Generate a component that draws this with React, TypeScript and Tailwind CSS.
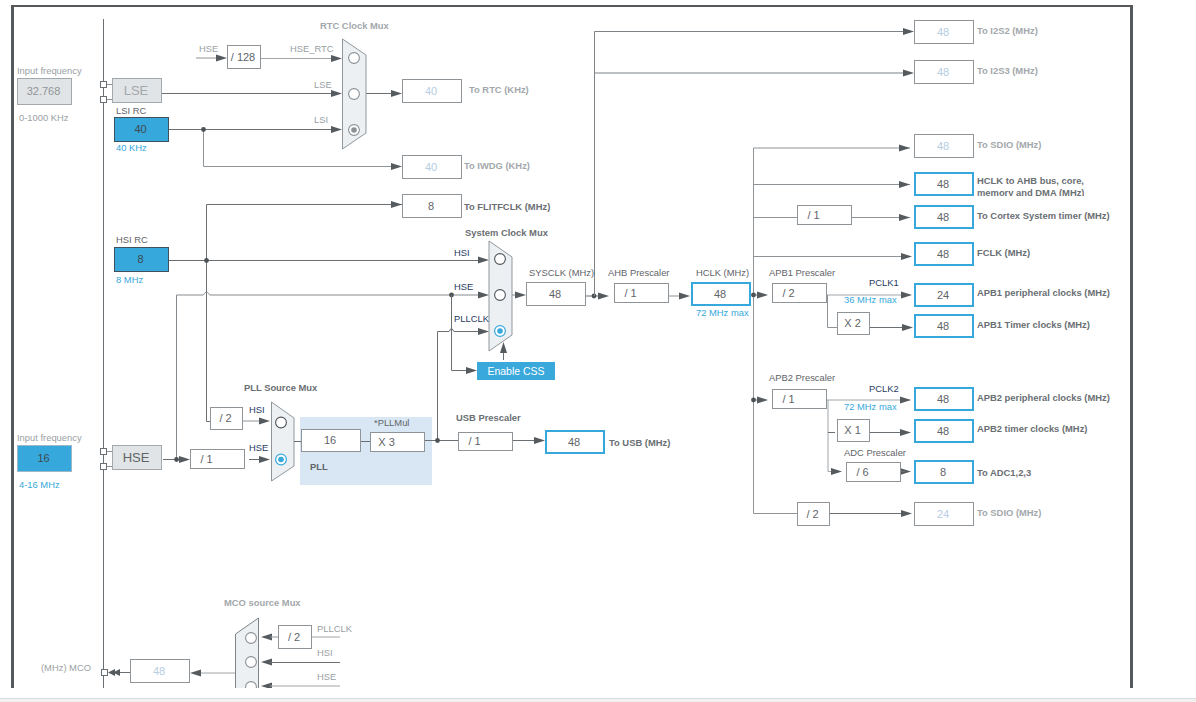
import React from "react";

const A = ({ x, y, d = "r" }: { x: number; y: number; d?: "r" | "l" | "u" }) => {
  // x,y = tip of the arrow
  const pts =
    d === "r"
      ? `${x},${y} ${x - 11},${y - 3.5} ${x - 11},${y + 3.5}`
      : d === "l"
        ? `${x},${y} ${x + 11},${y - 3.5} ${x + 11},${y + 3.5}`
        : `${x},${y} ${x - 3.5},${y + 11} ${x + 3.5},${y + 11}`;
  return <polygon points={pts} fill="#555a5e" />;
};

const Dot = ({ x, y }: { x: number; y: number }) => <circle cx={x} cy={y} r={2.4} fill="#4d5256" />;

const Radio = ({ x, y, kind }: { x: number; y: number; kind?: "gray" | "blue" | "dark" | "light" }) => {
  if (kind === "blue")
    return (
      <g>
        <circle cx={x} cy={y} r={5.4} fill="#fff" stroke="#36a8dc" strokeWidth={1.2} />
        <circle cx={x} cy={y} r={2.8} fill="#36a8dc" />
      </g>
    );
  if (kind === "gray")
    return (
      <g>
        <circle cx={x} cy={y} r={5.4} fill="#fff" stroke="#8b9094" strokeWidth={1.1} />
        <circle cx={x} cy={y} r={2.8} fill="#8b9094" />
      </g>
    );
  return <circle cx={x} cy={y} r={5.4} fill="#fff" stroke={kind === "dark" ? "#50555a" : "#8b9094"} strokeWidth={1.1} />;
};

const Wire = ({ d, c = "#6a6f73" }: { d: string; c?: string }) => <path d={d} fill="none" stroke={c} strokeWidth={1} />;

const Diagram = () => (
  <svg width={1196} height={688} className="absolute left-0 top-0">
    {/* main bus */}
    <Wire d="M103.5 19V688" />
    {/* RTC area */}
    <Wire d="M196 58H222" c="#8f9498" />
    <A x={227} y={58} />
    <Wire d="M261 58.5H338" c="#a0a5a9" />
    <A x={342} y={58.5} />
    <Wire d="M162 93.5H338" />
    <A x={342} y={93.5} />
    <Wire d="M169 129.5H338" />
    <A x={342} y={129.5} />
    <Wire d="M203.5 129.5V166.5H398" c="#8f9498" />
    <A x={402} y={166.5} />
    <Dot x={203.5} y={129.5} />
    <Wire d="M366 93.5H398" />
    <A x={402} y={93.5} />
    <Wire d="M107 84.5H112M107 99.5H112M107 451.5H112M107 466.5H112" c="#8f9498" />
    <polygon points="342.5,39 366,55 366,133 342.5,149" fill="#ecf0f3" stroke="#8f979c" strokeWidth={1} />
    <Radio x={354} y={58} />
    <Radio x={354} y={94} />
    <Radio x={354} y={130} kind="gray" />

    {/* FLITF + HSI */}
    <Wire d="M402 204.5H206.5V421.5H210" />
    <A x={402} y={204.5} />
    <Wire d="M169 260.5H485" />
    <A x={489} y={260} />
    <Dot x={206.5} y={260.5} />
    {/* HSE long line with hop */}
    <Wire d="M176.5 459V295H203C204 295 204.5 292 206.5 292C208.5 292 209 295 210 295H485" c="#858a8e" />
    <A x={489} y={295} />
    <Dot x={451.5} y={295} />
    <Wire d="M451.5 295V370.5H473" />
    <A x={477} y={370.5} />
    {/* PLLCLK */}
    <Wire d="M437.5 440V331.5H449C450 331.5 450 328.5 451.5 328.5C453 328.5 453 331.5 454 331.5H485" />
    <A x={489} y={331.5} />
    <Wire d="M503.5 360V345" />
    <A x={503.5} y={342} d="u" />
    <polygon points="489,241 512,257 512,335 489,351" fill="#ecf0f3" stroke="#8f979c" strokeWidth={1} />
    <Radio x={500} y={259} kind="dark" />
    <Radio x={500} y={295} kind="dark" />
    <Radio x={500} y={331} kind="blue" />

    {/* SYSCLK -> */}
    <Wire d="M512 295H522" c="#858a8e" />
    <A x={526} y={295} />
    <Wire d="M586 296H605" />
    <Dot x={594} y={296} />
    <A x={609} y={296} />
    <Wire d="M594.5 296V31.5H910" c="#7d8286" />
    <A x={914} y={31.5} />
    <Wire d="M594.5 73H910" c="#7d8286" />
    <A x={914} y={73} />
    <Wire d="M669 296H686" c="#8f9498" />
    <A x={690} y={296} />

    {/* HCLK bus */}
    <Wire d="M753.5 148V513.5H797" c="#8f9498" />
    <Wire d="M751 295H764" />
    <Dot x={753.5} y={295} />
    <A x={768} y={295} />
    <Wire d="M753.5 148H910" c="#8f9498" />
    <A x={910} y={148} />
    <Wire d="M753.5 184.5H910" c="#8f9498" />
    <A x={910} y={184.5} />
    <Wire d="M753.5 217.5H797M852 217.5H910" c="#8f9498" />
    <A x={910} y={217.5} />
    <Wire d="M753.5 256.5H910" c="#8f9498" />
    <A x={912} y={256.5} />
    {/* APB1 */}
    <Wire d="M827 295H910" c="#a0a5a9" />
    <A x={912} y={295} />
    <Wire d="M827.5 295V327.5H837" c="#8f9498" />
    <Wire d="M870 327.5H910" />
    <A x={913} y={327.5} />
    {/* APB2 */}
    <Wire d="M753.5 400H764" />
    <Dot x={753.5} y={400} />
    <A x={768} y={400} />
    <Wire d="M827 400H910" c="#a0a5a9" />
    <A x={911} y={400} />
    <Wire d="M828 400V471.5H838" c="#a0a5a9" />
    <Wire d="M828 432.5H835" c="#6a6f73" />
    <Wire d="M870 432.5H910" />
    <A x={911} y={432.5} />
    <A x={842} y={471.5} />
    <A x={911} y={471.5} />
    <Wire d="M900 471.5H905" c="#6a6f73" />
    <Wire d="M830 513.5H910" />
    <A x={912} y={513.5} />

    {/* HSE / PLL */}
    <Wire d="M163 459.5H186" />
    <Dot x={176.5} y={459.5} />
    <A x={190} y={459.5} />
    <Wire d="M243 421H266" c="#8f9498" />
    <A x={270} y={421} />
    <Wire d="M249 459.5H266" />
    <A x={270} y={459.5} />
    <polygon points="271.5,402 294,418 294,466 271.5,481" fill="#ecf0f3" stroke="#8f979c" strokeWidth={1} />
    <Radio x={281} y={422.5} kind="dark" />
    <Radio x={281} y={459.5} kind="blue" />
    <Wire d="M294 441.5H301M361 441.5H370" />
    <Wire d="M425 440.5H458" />
    <Dot x={437.5} y={440.5} />
    <Wire d="M513 440.5H541" />
    <A x={545} y={440.5} />

    {/* MCO */}
    <polygon points="235.5,634 258.5,618 258.5,700 235.5,700" fill="#ecf0f3" stroke="#7c8387" strokeWidth={1} />
    <Radio x={251} y={638} />
    <Radio x={251} y={662} />
    <Radio x={251} y={687} />
    <A x={261} y={637} d="l" />
    <A x={261} y={662} d="l" />
    <A x={261} y={686} d="l" />
    <Wire d="M270 637H278" c="#8f9498" />
    <Wire d="M312 637H340" c="#a0a5a9" />
    <Wire d="M270 662.5H340" />
    <Wire d="M270 686H340" c="#a0a5a9" />
    <Wire d="M235 673H198" c="#a0a5a9" />
    <A x={190} y={673} d="l" />
    <Wire d="M130 672.5H118" />
    <polygon points="108,672.5 115,669 115,676" fill="#555a5e" />
    <polygon points="113,672.5 120,669 120,676" fill="#555a5e" />
  </svg>
);

const Box = ({
  c,
  children,
}: {
  c: string;
  children?: React.ReactNode;
}) => <div className={`absolute flex items-center justify-center pr-[2px] text-[11px] leading-none ${c}`}>{children}</div>;

const plain = "bg-white border border-[#8f9498] text-[#5f6468]";
const muted = "bg-white border border-[#8f9498] text-[#b6cde3]";
const blue = "bg-white border-2 border-[#36a8dc] text-[#5f6468]";
const on = "bg-[#36a8dc] border border-[#40505c] text-[#3f4a52]";

const Sq = ({ c }: { c: string }) => <div className={`absolute w-[7px] h-[7px] bg-white border border-[#6a6f73] ${c}`} />;

const L = ({ c, children }: { c: string; children: React.ReactNode }) => (
  <div className={`absolute whitespace-nowrap text-[9.4px] leading-[12px] ${c}`}>{children}</div>
);

const gray = "text-[#9aa0a4]";
const dark = "text-[#5f6468]";
const navy = "text-[#1f3a5f]";
const sky = "text-[#36a8dc]";
const head = "font-bold text-[#6a6f73]";
const headMuted = "font-bold text-[#a3a8ac]";

export default function App() {
  return (
    <div className="relative w-[1196px] h-[702px] flex flex-col bg-white overflow-hidden font-['Liberation_Sans',Arial,sans-serif]">
      <div className="ml-[11px] mt-[5px] w-[1122px] h-[683px] shrink-0 border-l-[3px] border-t-[2px] border-r-[3px] border-[#55595c]" />
      <div className="mt-auto h-[4px] border-t border-[#dddddd] bg-[#f1f1f1]" />

      <div className="absolute left-0 top-0 w-[1196px] h-[688px] overflow-hidden">
        <div className="absolute left-[300px] top-[417px] w-[132px] h-[68px] bg-[#d9e7f4]" />
        <Diagram />

        <Sq c="left-[100px] top-[81px]" />
        <Sq c="left-[100px] top-[96px]" />
        <Sq c="left-[100px] top-[448px]" />
        <Sq c="left-[100px] top-[463px]" />
        <Sq c="left-[101px] top-[669px]" />

        {/* left column */}
        <L c={`left-[17px] top-[65px] ${gray}`}>Input frequency</L>
        <Box c="left-[17px] top-[78px] w-[55px] h-[27px] bg-[#e1e4e6] border border-[#a3a8ac] text-[#8f9498]">32.768</Box>
        <L c={`left-[19px] top-[112px] ${gray}`}>0-1000 KHz</L>
        <L c={`left-[17px] top-[432px] ${gray}`}>Input frequency</L>
        <Box c="left-[17px] top-[445px] w-[55px] h-[27px] bg-[#36a8dc] border border-[#9db8c8] text-[#3f4a52]">16</Box>
        <L c={`left-[19px] top-[479px] ${sky}`}>4-16 MHz</L>
        <L c={`left-[41px] top-[662px] ${gray}`}>(MHz) MCO</L>

        {/* oscillators */}
        <Box c="left-[112px] top-[78px] w-[50px] h-[25px] bg-[#e1e4e6] border border-[#a3a8ac] !text-[13px] text-[#a3a8ac]">LSE</Box>
        <L c={`left-[116px] top-[105px] ${dark}`}>LSI RC</L>
        <Box c={`left-[114px] top-[117px] w-[55px] h-[25px] ${on}`}>40</Box>
        <L c={`left-[116px] top-[142px] ${sky}`}>40 KHz</L>
        <L c={`left-[116px] top-[234px] ${dark}`}>HSI RC</L>
        <Box c={`left-[114px] top-[247px] w-[55px] h-[25px] ${on}`}>8</Box>
        <L c={`left-[116px] top-[274px] ${sky}`}>8 MHz</L>
        <Box c="left-[112px] top-[445px] w-[50px] h-[25px] bg-[#e1e4e6] border border-[#a3a8ac] !text-[13px] text-[#5f6468]">HSE</Box>

        {/* RTC */}
        <L c={`left-[199px] top-[43px] ${gray}`}>HSE</L>
        <Box c={`left-[227px] top-[45px] w-[34px] h-[24px] ${plain}`}>/ 128</Box>
        <L c={`left-[290px] top-[43px] ${gray}`}>HSE_RTC</L>
        <L c={`left-[320px] top-[20px] ${headMuted}`}>RTC Clock Mux</L>
        <L c={`left-[314px] top-[79px] ${gray}`}>LSE</L>
        <L c={`left-[314px] top-[114px] ${gray}`}>LSI</L>
        <Box c={`left-[402px] top-[79px] w-[60px] h-[24px] ${muted}`}>40</Box>
        <L c={`left-[469px] top-[84px] ${headMuted}`}>To RTC (KHz)</L>
        <Box c={`left-[402px] top-[155px] w-[60px] h-[24px] ${muted}`}>40</Box>
        <L c={`left-[464px] top-[160px] ${headMuted}`}>To IWDG (KHz)</L>
        <Box c={`left-[402px] top-[194px] w-[60px] h-[24px] ${plain}`}>8</Box>
        <L c={`left-[464px] top-[201px] ${head}`}>To FLITFCLK (MHz)</L>

        {/* system clock */}
        <L c={`left-[465px] top-[227px] ${head}`}>System Clock Mux</L>
        <L c={`left-[454px] top-[247px] ${navy}`}>HSI</L>
        <L c={`left-[454px] top-[281px] ${navy}`}>HSE</L>
        <L c={`left-[454px] top-[313px] ${navy}`}>PLLCLK</L>
        <Box c="left-[477px] top-[362px] w-[78px] h-[18px] bg-[#39a8db] text-white !text-[10.5px] pl-[2px]">Enable CSS</Box>
        <L c={`left-[529px] top-[267px] ${dark}`}>SYSCLK (MHz)</L>
        <Box c={`left-[526px] top-[282px] w-[60px] h-[24px] ${plain}`}>48</Box>
        <L c={`left-[608px] top-[267px] ${dark}`}>AHB Prescaler</L>
        <Box c={`left-[614px] top-[283px] w-[55px] h-[20px] ${plain}`}>
          <span className="mr-[20px]">/ 1</span>
        </Box>
        <L c={`left-[696px] top-[267px] ${dark}`}>HCLK (MHz)</L>
        <Box c={`left-[691px] top-[282px] w-[60px] h-[24px] ${blue}`}>48</Box>
        <L c={`left-[696px] top-[307px] ${sky}`}>72 MHz max</L>

        {/* PLL */}
        <L c={`left-[244px] top-[382px] ${head}`}>PLL Source Mux</L>
        <Box c={`left-[210px] top-[407px] w-[33px] h-[23px] ${plain}`}>/ 2</Box>
        <L c={`left-[249px] top-[404px] ${navy}`}>HSI</L>
        <L c={`left-[249px] top-[442px] ${navy}`}>HSE</L>
        <Box c={`left-[190px] top-[449px] w-[55px] h-[20px] ${plain}`}>
          <span className="mr-[20px]">/ 1</span>
        </Box>
        <Box c={`left-[301px] top-[429px] w-[60px] h-[23px] ${plain}`}>16</Box>
        <L c={`left-[374px] top-[417px] ${dark}`}>*PLLMul</L>
        <Box c={`left-[370px] top-[432px] w-[55px] h-[20px] ${plain}`}>
          <span className="mr-[20px]">X 3</span>
        </Box>
        <L c={`left-[310px] top-[461px] font-bold ${dark}`}>PLL</L>
        <L c={`left-[456px] top-[412px] ${head}`}>USB Prescaler</L>
        <Box c={`left-[458px] top-[432px] w-[55px] h-[19px] ${plain}`}>
          <span className="mr-[20px]">/ 1</span>
        </Box>
        <Box c={`left-[545px] top-[430px] w-[60px] h-[24px] ${blue}`}>48</Box>
        <L c={`left-[609px] top-[437px] ${head}`}>To USB (MHz)</L>

        {/* right column */}
        <Box c={`left-[914px] top-[20px] w-[60px] h-[24px] ${muted}`}>48</Box>
        <L c={`left-[977px] top-[25px] ${headMuted}`}>To I2S2 (MHz)</L>
        <Box c={`left-[914px] top-[60px] w-[60px] h-[24px] ${muted}`}>48</Box>
        <L c={`left-[977px] top-[65px] ${headMuted}`}>To I2S3 (MHz)</L>
        <Box c={`left-[914px] top-[134px] w-[60px] h-[24px] ${muted}`}>48</Box>
        <L c={`left-[977px] top-[139px] ${headMuted}`}>To SDIO (MHz)</L>
        <Box c={`left-[914px] top-[172px] w-[60px] h-[24px] ${blue}`}>48</Box>
        <L c={`left-[977px] top-[175px] h-[21px] overflow-hidden ${head}`}>
          HCLK to AHB bus, core,
          <br />
          memory and DMA (MHz)
        </L>
        <Box c={`left-[797px] top-[205px] w-[55px] h-[20px] ${plain}`}>
          <span className="mr-[20px]">/ 1</span>
        </Box>
        <Box c={`left-[914px] top-[205px] w-[60px] h-[24px] ${blue}`}>48</Box>
        <L c={`left-[977px] top-[210px] ${head}`}>To Cortex System timer (MHz)</L>
        <Box c={`left-[914px] top-[242px] w-[60px] h-[24px] ${blue}`}>48</Box>
        <L c={`left-[977px] top-[247px] ${head}`}>FCLK (MHz)</L>

        <L c={`left-[769px] top-[267px] ${dark}`}>APB1 Prescaler</L>
        <Box c={`left-[772px] top-[283px] w-[55px] h-[20px] ${plain}`}>
          <span className="mr-[20px]">/ 2</span>
        </Box>
        <L c={`left-[869px] top-[277px] ${navy}`}>PCLK1</L>
        <L c={`left-[844px] top-[294px] ${sky}`}>36 MHz max</L>
        <Box c={`left-[914px] top-[283px] w-[60px] h-[24px] ${blue}`}>24</Box>
        <L c={`left-[977px] top-[287px] ${head}`}>APB1 peripheral clocks (MHz)</L>
        <Box c={`left-[837px] top-[312px] w-[33px] h-[23px] ${plain}`}>X 2</Box>
        <Box c={`left-[914px] top-[314px] w-[60px] h-[24px] ${blue}`}>48</Box>
        <L c={`left-[977px] top-[319px] ${head}`}>APB1 Timer clocks (MHz)</L>

        <L c={`left-[769px] top-[372px] ${dark}`}>APB2 Prescaler</L>
        <Box c={`left-[772px] top-[389px] w-[55px] h-[20px] ${plain}`}>
          <span className="mr-[20px]">/ 1</span>
        </Box>
        <L c={`left-[869px] top-[383px] ${navy}`}>PCLK2</L>
        <L c={`left-[844px] top-[401px] ${sky}`}>72 MHz max</L>
        <Box c={`left-[914px] top-[387px] w-[60px] h-[24px] ${blue}`}>48</Box>
        <L c={`left-[977px] top-[392px] ${head}`}>APB2 peripheral clocks (MHz)</L>
        <Box c={`left-[837px] top-[419px] w-[33px] h-[23px] ${plain}`}>X 1</Box>
        <Box c={`left-[914px] top-[419px] w-[60px] h-[24px] ${blue}`}>48</Box>
        <L c={`left-[977px] top-[423px] ${head}`}>APB2 timer clocks (MHz)</L>
        <L c={`left-[844px] top-[447px] ${dark}`}>ADC Prescaler</L>
        <Box c={`left-[846px] top-[462px] w-[55px] h-[20px] ${plain}`}>
          <span className="mr-[20px]">/ 6</span>
        </Box>
        <Box c={`left-[914px] top-[460px] w-[60px] h-[24px] ${blue}`}>8</Box>
        <L c={`left-[977px] top-[467px] ${head}`}>To ADC1,2,3</L>
        <Box c={`left-[797px] top-[502px] w-[33px] h-[24px] ${plain}`}>/ 2</Box>
        <Box c={`left-[914px] top-[502px] w-[60px] h-[24px] ${muted}`}>24</Box>
        <L c={`left-[977px] top-[507px] ${headMuted}`}>To SDIO (MHz)</L>

        {/* MCO */}
        <L c={`left-[224px] top-[597px] ${headMuted}`}>MCO source Mux</L>
        <Box c={`left-[278px] top-[625px] w-[34px] h-[24px] ${plain}`}>/ 2</Box>
        <L c={`left-[317px] top-[623px] ${gray}`}>PLLCLK</L>
        <L c={`left-[317px] top-[647px] ${gray}`}>HSI</L>
        <L c={`left-[317px] top-[671px] ${gray}`}>HSE</L>
        <Box c={`left-[130px] top-[659px] w-[60px] h-[24px] ${muted}`}>48</Box>
      </div>
    </div>
  );
}
